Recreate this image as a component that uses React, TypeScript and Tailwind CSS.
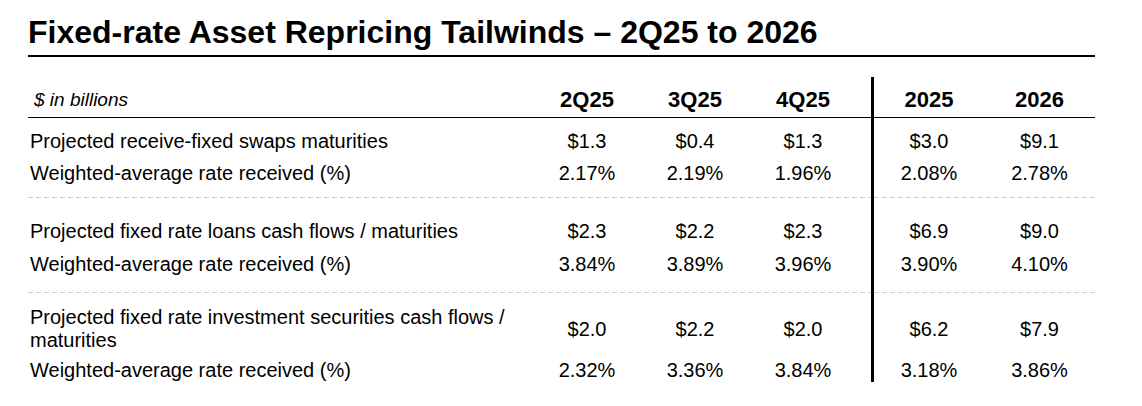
import React from 'react';

const cols = 'grid grid-cols-[505px_108px_108px_108px_14px_3px_110px_111px]';

interface Group {
  label: string;
  amounts: string[];
  rates: string[];
}

const groups: Group[] = [
  {
    label: 'Projected receive-fixed swaps maturities',
    amounts: ['$1.3', '$0.4', '$1.3', '$3.0', '$9.1'],
    rates: ['2.17%', '2.19%', '1.96%', '2.08%', '2.78%'],
  },
  {
    label: 'Projected fixed rate loans cash flows / maturities',
    amounts: ['$2.3', '$2.2', '$2.3', '$6.9', '$9.0'],
    rates: ['3.84%', '3.89%', '3.96%', '3.90%', '4.10%'],
  },
  {
    label: 'Projected fixed rate investment securities cash flows / maturities',
    amounts: ['$2.0', '$2.2', '$2.0', '$6.2', '$7.9'],
    rates: ['2.32%', '3.36%', '3.84%', '3.18%', '3.86%'],
  },
];

// padding for each group's two rows
const rowPads = [
  ['pt-[12px]', 'pt-[9px] pb-[12px]'],
  ['pt-[22px]', 'pt-[10px] pb-[16px]'],
  ['pt-[13px]', 'pt-[7px]'],
];

function Row({ label, values, pad, h }: { label: string; values: string[]; pad: string; h: string }) {
  const cell = (v: string, i: number) => (
    <div key={i} className={pad}>
      <div className={`${h} flex items-center justify-center`}>{v}</div>
    </div>
  );
  return (
    <div className={cols}>
      <div className={`${pad} pl-[2px]`}>
        <div className={`${h} flex items-center`}>{label}</div>
      </div>
      {values.slice(0, 3).map(cell)}
      <div />
      <div className="bg-black" />
      {values.slice(3).map(cell)}
    </div>
  );
}

function Separator() {
  return (
    <div className={`${cols} h-px`}>
      <div className="col-span-5 bg-[linear-gradient(to_right,#cccccc_62%,transparent_0)] bg-[length:8px_1px] bg-repeat-x" />
      <div className="bg-black" />
      <div className="col-span-2 bg-[linear-gradient(to_right,#cccccc_62%,transparent_0)] bg-[length:8px_1px] bg-repeat-x" />
    </div>
  );
}

export default function App() {
  const heads = ['2Q25', '3Q25', '4Q25', '2025', '2026'];

  return (
    <div className="w-[1142px] h-[406px] bg-white pl-[28px] pt-[14px] text-black font-['Liberation_Sans',Arial,sans-serif]">
      <h1 className="text-[32px] leading-[36px] font-bold">Fixed-rate Asset Repricing Tailwinds – 2Q25 to 2026</h1>
      <div className="mt-[5px] h-[2px] w-[1067px] bg-black" />

      <div className="mt-[20px] w-[1067px] text-[20px] leading-[23px]">
        {/* header */}
        <div className={`${cols} h-[40px]`}>
          <div className="flex items-end pl-[6px] pb-[8px] text-[19px] leading-[19px] italic">$ in billions</div>
          {heads.slice(0, 3).map((t) => (
            <div key={t} className="flex items-end justify-center pb-[6px] text-[22px] leading-[22px] font-bold">
              {t}
            </div>
          ))}
          <div />
          <div className="bg-black" />
          {heads.slice(3).map((t) => (
            <div key={t} className="flex items-end justify-center pb-[6px] text-[22px] leading-[22px] font-bold">
              {t}
            </div>
          ))}
        </div>
        <div className="h-px bg-black" />

        {groups.map((g, gi) => (
          <React.Fragment key={gi}>
            {gi > 0 && <Separator />}
            <Row label={g.label} values={g.amounts} pad={rowPads[gi][0]} h={gi === 2 ? 'h-[46px]' : 'h-[23px]'} />
            <Row label="Weighted-average rate received (%)" values={g.rates} pad={rowPads[gi][1]} h="h-[23px]" />
          </React.Fragment>
        ))}
      </div>
    </div>
  );
}
